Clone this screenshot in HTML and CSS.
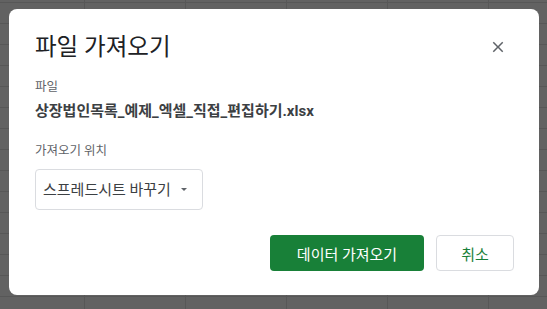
FILE: index.html
```html
<!DOCTYPE html>
<html lang="ko">
<head>
<meta charset="utf-8">
<link rel="stylesheet" href="styles.css">
</head>
<body>
<div class="dialog">
  <div class="header">
    <h1 class="title">파일 가져오기</h1>
    <svg class="close" width="18" height="18" viewBox="0 0 24 24"><path fill="#5f6368" d="M19 6.41L17.59 5 12 10.59 6.41 5 5 6.41 10.59 12 5 17.59 6.41 19 12 13.41 17.59 19 19 17.59 13.41 12z"/></svg>
  </div>
  <div class="label first">파일</div>
  <div class="filename">상장법인목록_예제_엑셀_직접_편집하기.xlsx</div>
  <div class="label second">가져오기 위치</div>
  <div class="select">
    <span class="select-text">스프레드시트 바꾸기</span>
    <span class="arrow"></span>
  </div>
  <div class="actions">
    <button class="btn primary">데이터 가져오기</button>
    <button class="btn secondary">취소</button>
  </div>
</div>
</body>
</html>
```
FILE: styles.css
```css
html, body {
  margin: 0;
  padding: 0;
}
body {
  width: 547px;
  height: 309px;
  overflow: hidden;
  background-color: #626262;
  background-image:
    linear-gradient(to right, #575757 1px, transparent 1px),
    linear-gradient(to bottom, #575757 1px, transparent 1px);
  background-size: 101px 100%, 100% 21px;
  background-position: 84px 0, 0 2px;
  font-family: Roboto, "Noto Sans CJK KR", sans-serif;
}
.dialog {
  margin: 9px 0 0 9px;
  width: 530px;
  height: 286px;
  box-sizing: border-box;
  background: #fff;
  border-radius: 8px;
  padding: 24px 25px 24px 26px;
  display: flex;
  flex-direction: column;
}
.header {
  display: flex;
  justify-content: space-between;
  align-items: center;
  height: 28px;
}
.title {
  margin: 0;
  font-size: 23.5px;
  font-weight: 400;
  line-height: 28px;
  color: #202124;
}
.close {
  margin-right: 7px;
}
.label {
  font-size: 12.5px;
  line-height: 20px;
  color: #5f6368;
}
.label.first {
  margin-top: 16px;
}
.label.second {
  margin-top: 20px;
}
.filename {
  margin-top: 4px;
  font-size: 15px;
  font-weight: 700;
  line-height: 20px;
  color: #3c4043;
}
.select {
  margin-top: 8px;
  width: 168px;
  height: 41px;
  box-sizing: border-box;
  border: 1px solid #dadce0;
  border-radius: 4px;
  display: flex;
  align-items: center;
  padding-left: 7px;
  font-size: 15px;
  color: #3c4043;
}
.select-text {
  line-height: 20px;
}
.arrow {
  margin-left: 10px;
  width: 0;
  height: 0;
  border-left: 3px solid transparent;
  border-right: 3px solid transparent;
  border-top: 3px solid #5f6368;
}
.actions {
  margin-top: auto;
  display: flex;
  justify-content: flex-end;
  gap: 12px;
}
.btn {
  height: 36px;
  box-sizing: border-box;
  border-radius: 4px;
  font-family: Roboto, "Noto Sans CJK KR", sans-serif;
  font-size: 15px;
  font-weight: 400;
  padding: 0;
  cursor: pointer;
}
.primary {
  width: 154px;
  background: #188038;
  color: #fff;
  border: none;
}
.secondary {
  width: 78px;
  background: #fff;
  color: #188038;
  border: 1px solid #dadce0;
}
```
